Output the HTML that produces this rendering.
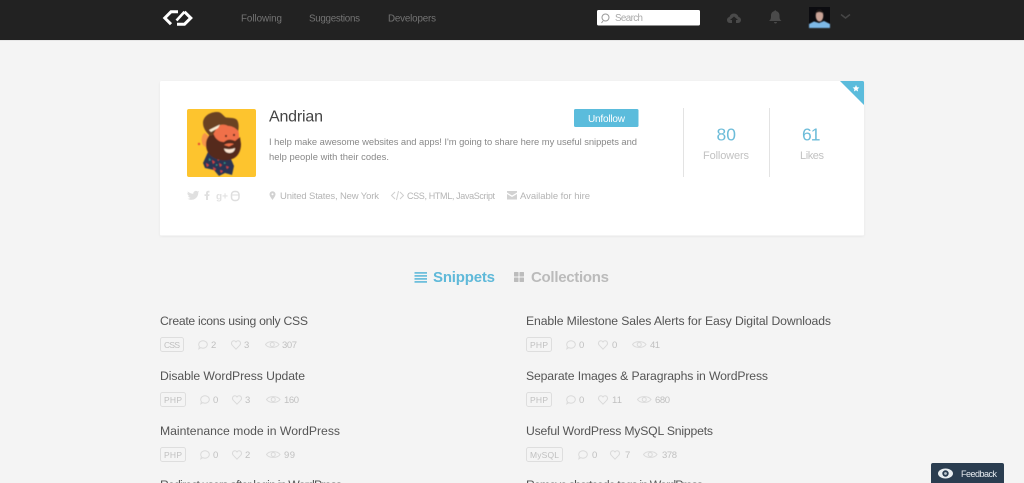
<!DOCTYPE html>
<html><head><meta charset="utf-8"><title>Andrian</title>
<style>
html,body{margin:0;padding:0;background:#f4f4f4;width:1024px;height:483px;overflow:hidden}
svg{display:block}
text{font-family:"Liberation Sans",sans-serif}
</style></head><body>
<svg width="1024" height="483" viewBox="0 0 1024 483" xmlns="http://www.w3.org/2000/svg">
<defs>
<g id="c"><path d="M.7 4.500a4.300 3.700 0 1 1 2 3.100L.9 8.800l.5-2.200A3.600 3.600 0 0 1 .7 4.500z" fill="none" stroke="#dadada" stroke-width="1"/></g>
<g id="h"><path d="M5 9.200L1.200 5.200C-.4 3.400.8.800 3 .800c1 0 1.600.6 2 1.200.4-.6 1-1.200 2-1.200 2.200 0 3.400 2.600 1.800 4.400z" fill="none" stroke="#dadada" stroke-width="1"/></g>
<g id="e"><path d="M.5 4.500C3 .6 11.500.6 14 4.500 11.500 8.400 3 8.400.5 4.500z" fill="none" stroke="#dadada" stroke-width="1"/><circle cx="7.250" cy="4.500" r="2" fill="none" stroke="#dadada"/></g>
<filter id="b" x="-10%" y="-10%" width="120%" height="120%"><feGaussianBlur stdDeviation=".4"/></filter>
<filter id="b2" x="-10%" y="-10%" width="120%" height="120%"><feGaussianBlur stdDeviation=".6"/></filter>
<filter id="sh" x="-2%" y="-5%" width="104%" height="110%"><feDropShadow dx="0" dy="1" stdDeviation="1" flood-color="#000" flood-opacity=".06"/></filter>
</defs>

<rect width="1024" height="483" fill="#f4f4f4"/>
<!-- header -->
<rect width="1024" height="40" fill="#222"/>
<rect y="40" width="1024" height="1" fill="#e6e6e6"/>
<g fill="none" stroke="#fff" stroke-width="3" stroke-linejoin="miter">
<path d="M178 11.800H171L164.800 18l6.200 6.200"/>
<path d="M177 24.200H184.500L190.800 18l-6.300-6.200"/>
<path d="M184.500 11.800L176.500 20.500" stroke-width="2.600"/>
</g>
<g font-size="9.800" fill="#747474">
<text x="241" y="21.500" textLength="41">Following</text>
<text x="309" y="21.500" textLength="51">Suggestions</text>
<text x="388" y="21.500" textLength="48">Developers</text>
</g>
<rect x="597" y="10" width="103" height="15.500" rx="1.500" fill="#fff"/>
<circle cx="605.500" cy="17.500" r="3.500" fill="none" stroke="#999" stroke-width="1"/>
<path d="M603 21l-1.500 2" stroke="#999"/>
<text x="615" y="21" font-size="9.800" fill="#aaa" textLength="28">Search</text>
<!-- cloud -->
<path d="M730 23c-2 0-3-1.500-3-3 0-1.500 1-2.800 2.500-3 .5-2 2.200-3.500 4.500-3.500 2.200 0 4 1.500 4.500 3.500 1.500.2 2.500 1.500 2.500 3s-1.200 3-3 3h-2v-3h2l-4-3.500-4 3.500h2v3z" fill="#4a4a4a"/>
<!-- bell -->
<path d="M769 21c2-1.500 2-3 2-5.500 0-2.500 1.500-4 3.500-4.500 0-1 1.500-1 1.500 0 2 .5 3.500 2 3.500 4.500 0 2.500 0 4 2 5.500zM774 22h3c0 2-3 2-3 0z" fill="#4a4a4a"/>
<!-- photo avatar -->
<rect x="809" y="7" width="21" height="21" fill="#0c0c10"/>
<g filter="url(#b2)">
<path d="M809 28v-4l5-2.500 5 1.500 5-2 6 3v4z" fill="#7db8e6"/>
<ellipse cx="819.500" cy="15.500" rx="3.800" ry="6" fill="#c9a397"/>
<path d="M815.500 12.500c0-4 7.500-4 8 0l-1 .8c-2-1.500-4.500-1.500-6 0z" fill="#1a1414"/>
</g>
<path d="M841 14.500l4.500 3.500 4.500-3.500" fill="none" stroke="#464646" stroke-width="1.500"/>

<!-- card -->
<rect x="160" y="81" width="704" height="154.500" rx="1.500" fill="#fff" filter="url(#sh)"/>
<path d="M840 81h22.500a1.500 1.500 0 0 1 1.500 1.500V105z" fill="#5bbcdc"/>
<path d="M856 85l1 2.200 2.400.3-1.800 1.600.5 2.400-2.100-1.200-2.100 1.200.5-2.400-1.800-1.600 2.400-.3z" fill="#fff"/>

<!-- illustrated avatar -->
<rect x="187" y="109" width="69" height="68" rx="2" fill="#fdc42e"/>
<g filter="url(#b)">
<!-- shirt -->
<path d="M208 152l-5 11 2 5 9 2 5 6 6-3 7 2 2-9-3-7-14-5z" fill="#2c3552"/>
<path d="M206 163l3 2-2 2zM212 160l3 2-2 2zM213 167l3 2-2 2zM219 163l3 2-2 2zM220 170l3 1-2 2zM226 166l3 1-2 2zM217 157l3 2-2 2z" fill="#d8443c"/>
<path d="M209 158l2 2-2 1zM216 164l2 1-2 1zM224 162l2 1-2 1z" fill="#2f9a8f"/>
<!-- ear -->
<path d="M205 133c-3 1-4 6-3 10 1 3 4 5 7 4l3-8z" fill="#f7944a"/>
<!-- neck+face -->
<path d="M211 128l20-6c6 2 8 7 8 15l-1 10-26 8z" fill="#f0704a"/>
<!-- beard -->
<path d="M207 139c-2 5-1 12 3 16 5 5 15 7 22 4 6-2 9-8 9-15l-1-7-5 4c-4-2-8-2-11 1-4 0-7-2-9-5l-2-4-3 1z" fill="#54291a"/>
<path d="M224 148.500c3 1 8 1 11-.5 0 3-2.500 5-5.500 5s-5-2-5.500-4.500z" fill="#fbe6d3"/>
<path d="M224 145c3-2 7-2 10-1l-5 2.500z" fill="#f0704a"/>
<!-- hair -->
<path d="M203 123c0-6 6-11 14-11 5 0 6 4 9 5.500 4 .5 9 0 11 2.500 2 3 2 8 1 11-2-3-6-5-10-5-3-2-8-2-11 1l-4 8-3 1c-4-4-7-8-7-13z" fill="#6b4323"/>
<path d="M209 130l11-5.500-2 3.500-7 4z" fill="#fbeed4"/>
<circle cx="226" cy="136" r="1.100" fill="#4a2415"/><circle cx="234" cy="135" r="1.100" fill="#4a2415"/>
<circle cx="199" cy="144" r="1.200" fill="#e84b30"/>
</g>

<text x="269" y="121.500" font-size="16" fill="#444" textLength="54">Andrian</text>
<rect x="574" y="109" width="64.500" height="18" rx="1.500" fill="#5bbcdc"/>
<text x="588" y="122" font-size="10" fill="#fff" textLength="37">Unfollow</text>
<g font-size="9.400" fill="#888">
<text x="269" y="145" textLength="368">I help make awesome websites and apps! I'm going to share here my useful snippets and</text>
<text x="269" y="160" textLength="120">help people with their codes.</text>
</g>
<!-- social -->
<path d="M187.500 191.500c2.500 1.800 4.500 2.300 5.800 2.200-.2-2.500 2.700-3.700 4.300-2.200l1.400-.5-.7 1.500c0 4-2.500 7-6.500 7.300-1.700.1-3.200-.3-4.300-1 1.200 0 2.200-.3 3-1-1.200-.1-2-.8-2.400-1.800h1.200c-1.200-.6-2-1.700-2-3 .4.2.8.300 1.200.3-1-.8-1.200-1.500-.9-2.600z" fill="#e0e0e0"/>
<path d="M206 200v-4h-1.500v-1.700h1.500V193c0-1.500 1-2.300 2.300-2.300h1.200v1.800h-.8c-.6 0-.7.300-.7.700v1.100h1.500l-.2 1.700h-1.300v4z" fill="#e0e0e0"/>
<text x="216" y="199.500" font-size="10" font-weight="bold" fill="#e2e2e2">g+</text>
<rect x="231.500" y="191.500" width="7.500" height="9" rx="3" fill="none" stroke="#dedede" stroke-width="1.500"/>
<path d="M231.500 195h7.500" stroke="#dedede"/>
<!-- meta -->
<path d="M272.500 200c-1.500-2.500-3-4-3-5.800a3 3 0 0 1 6 0c0 1.800-1.500 3.300-3 5.800z" fill="#d2d2d2"/>
<circle cx="272.500" cy="194.200" r="1" fill="#fff"/>
<g fill="#b4b4b4">
<text x="280" y="199" font-size="9.500" textLength="99">United States, New York</text>
<text x="407" y="199" font-size="9" textLength="88">CSS, HTML, JavaScript</text>
<text x="520" y="199" font-size="9.500" textLength="70">Available for hire</text>
</g>
<path d="M395 192l-3.500 3.500 3.500 3.500M400 192l3.500 3.500-3.500 3.500M398.500 191l-2 9" fill="none" stroke="#cfcfcf" stroke-width="1"/>
<path d="M507 191h10v1.500l-5 3-5-3zM507 194l5 3 5-3v5.500h-10z" fill="#d2d2d2"/>
<!-- stats -->
<rect x="683" y="108" width="1" height="69" fill="#e3e3e3"/>
<rect x="769" y="108" width="1" height="69" fill="#e3e3e3"/>
<g font-size="17.500" fill="#6cbcd9">
<text x="716.500" y="140.500" textLength="19.500">80</text>
<text x="802" y="140.500" textLength="18.500">61</text>
</g>
<g font-size="11" fill="#c2c2c2">
<text x="703" y="159" textLength="46">Followers</text>
<text x="800" y="159" textLength="24">Likes</text>
</g>

<!-- tabs -->
<g fill="#6fbfdc"><rect x="414.500" y="272" width="12.500" height="1.800"/><rect x="414.500" y="275" width="12.500" height="1.800"/><rect x="414.500" y="278" width="12.500" height="1.800"/><rect x="414.500" y="281" width="12.500" height="1.800"/></g>
<text x="433" y="282" font-size="15" font-weight="bold" fill="#5fb9d9" textLength="62">Snippets</text>
<g fill="#bcbcbc"><rect x="514" y="272" width="4.500" height="4.500" rx=".6"/><rect x="519.500" y="272" width="4.500" height="4.500" rx=".6"/><rect x="514" y="277.500" width="4.500" height="4.500" rx=".6"/><rect x="519.500" y="277.500" width="4.500" height="4.500" rx=".6"/></g>
<text x="531" y="282" font-size="15" font-weight="bold" fill="#bbb" textLength="78">Collections</text>

<!-- titles -->
<g font-size="12.200" fill="#555">
<text x="160" y="325" textLength="148">Create icons using only CSS</text>
<text x="160" y="380" textLength="145">Disable WordPress Update</text>
<text x="160" y="435" textLength="180">Maintenance mode in WordPress</text>
<text x="160" y="489" textLength="182">Redirect users after login in WordPress</text>
<text x="526" y="325" textLength="305">Enable Milestone Sales Alerts for Easy Digital Downloads</text>
<text x="526" y="380" textLength="242">Separate Images &amp; Paragraphs in WordPress</text>
<text x="526" y="435" textLength="187">Useful WordPress MySQL Snippets</text>
<text x="526" y="489" textLength="177">Remove shortcode tags in WordPress</text>
</g>

<!-- tags -->
<g fill="none" stroke="#dedede">
<rect x="160.500" y="337.500" width="23" height="14" rx="2"/>
<rect x="160.500" y="392.500" width="25" height="14" rx="2"/>
<rect x="160.500" y="447.500" width="25" height="14" rx="2"/>
<rect x="526.500" y="337.500" width="25" height="14" rx="2"/>
<rect x="526.500" y="392.500" width="25" height="14" rx="2"/>
<rect x="526.500" y="447.500" width="36" height="14" rx="2"/>
</g>
<g font-size="8.500" fill="#c0c0c0">
<text x="164" y="348" textLength="16">CSS</text>
<text x="164" y="403" textLength="18">PHP</text>
<text x="164" y="458" textLength="18">PHP</text>
<text x="530" y="348" textLength="18">PHP</text>
<text x="530" y="403" textLength="18">PHP</text>
<text x="530" y="458" textLength="29">MySQL</text>
</g>
<g font-size="9.500" fill="#c0c0c0">
<text x="211" y="348">2</text><text x="244" y="348">3</text><text x="282" y="348" textLength="15">307</text>
<text x="213" y="403">0</text><text x="245" y="403">3</text><text x="284" y="403" textLength="15">160</text>
<text x="213" y="458">0</text><text x="245" y="458">2</text><text x="284" y="458" textLength="11">99</text>
<text x="579" y="348">0</text><text x="612" y="348">0</text><text x="650" y="348" textLength="10">41</text>
<text x="579" y="403">0</text><text x="612" y="403" textLength="10">11</text><text x="655" y="403" textLength="15">680</text>
<text x="592" y="458">0</text><text x="625" y="458">7</text><text x="662" y="458" textLength="15">378</text>
</g>
<use href="#c" x="198" y="340"/><use href="#h" x="231" y="340"/><use href="#e" x="265" y="340"/>
<use href="#c" x="200" y="395"/><use href="#h" x="232" y="395"/><use href="#e" x="266" y="395"/>
<use href="#c" x="200" y="450"/><use href="#h" x="232" y="450"/><use href="#e" x="266" y="450"/>
<use href="#c" x="566" y="340"/><use href="#h" x="598" y="340"/><use href="#e" x="632" y="340"/>
<use href="#c" x="566" y="395"/><use href="#h" x="598" y="395"/><use href="#e" x="637" y="395"/>
<use href="#c" x="578" y="450"/><use href="#h" x="610" y="450"/><use href="#e" x="643" y="450"/>

<!-- feedback -->
<path d="M931 483v-18a2 2 0 0 1 2-2h69a2 2 0 0 1 2 2v18z" fill="#2a3d50"/>
<ellipse cx="945.500" cy="473.500" rx="7.500" ry="5" fill="#e8edf0"/>
<circle cx="945.500" cy="473.500" r="3.200" fill="#2a3d50"/>
<circle cx="945.500" cy="473.500" r="1.400" fill="#b9c4cc"/>
<text x="961" y="477" font-size="9" fill="#e6ebef" textLength="36">Feedback</text>
</svg>
</body></html>
